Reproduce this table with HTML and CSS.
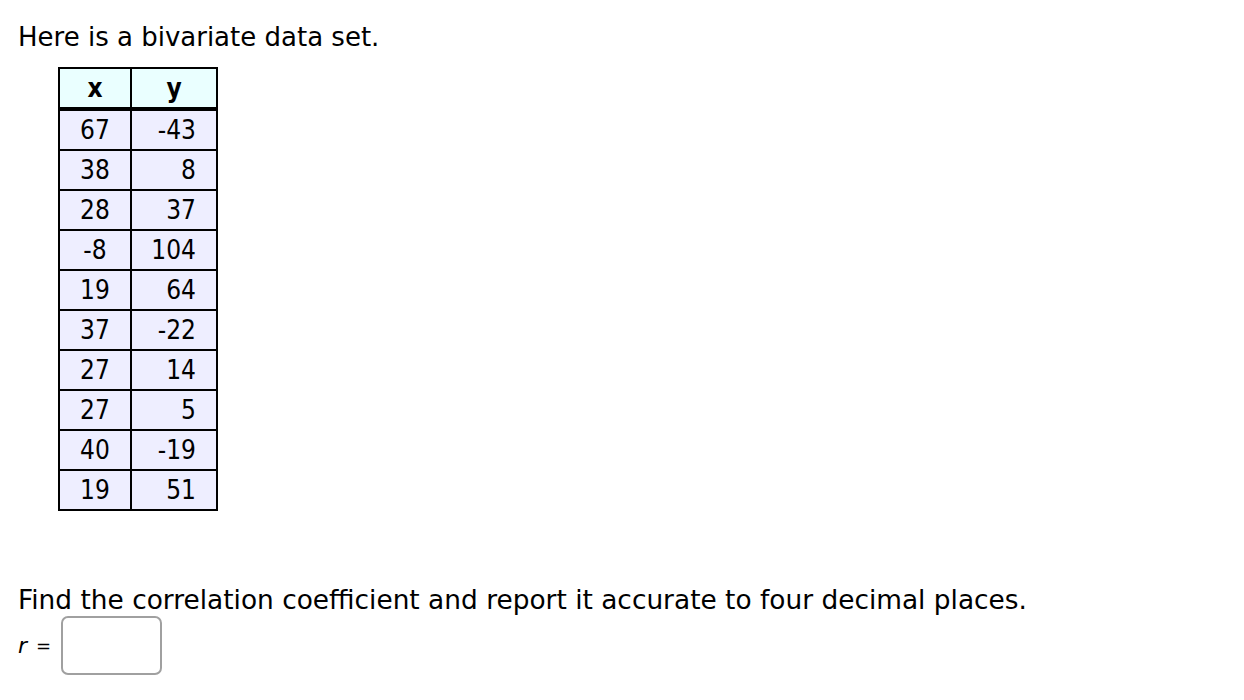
FILE: index.html
```html
<!DOCTYPE html>
<html>
<head>
<meta charset="utf-8">
<link rel="stylesheet" href="styles.css">
</head>
<body>
<div class="page">
  <p class="intro">Here is a bivariate data set.</p>
  <table class="data">
    <thead>
      <tr><th class="cx">x</th><th class="cy">y</th></tr>
    </thead>
    <tbody>
      <tr><td class="cx">67</td><td class="cy">-43</td></tr>
      <tr><td class="cx">38</td><td class="cy">8</td></tr>
      <tr><td class="cx">28</td><td class="cy">37</td></tr>
      <tr><td class="cx">-8</td><td class="cy">104</td></tr>
      <tr><td class="cx">19</td><td class="cy">64</td></tr>
      <tr><td class="cx">37</td><td class="cy">-22</td></tr>
      <tr><td class="cx">27</td><td class="cy">14</td></tr>
      <tr><td class="cx">27</td><td class="cy">5</td></tr>
      <tr><td class="cx">40</td><td class="cy">-19</td></tr>
      <tr><td class="cx">19</td><td class="cy">51</td></tr>
    </tbody>
  </table>
  <p class="question">Find the correlation coefficient and report it accurate to four decimal places.</p>
  <div class="answer">
    <span class="var">r</span><span class="eq">=</span><span class="box"></span>
  </div>
</div>
</body>
</html>
```
FILE: styles.css
```css
html, body {
  margin: 0;
  padding: 0;
  background: #ffffff;
}
body {
  font-family: "DejaVu Sans", sans-serif;
  color: #000;
}
.page {
  padding: 19px 0 0 18px;
}
.intro {
  margin: 0;
  font-size: 26px;
  line-height: 36px;
}
.data {
  margin: 12px 0 0 40px;
  border-collapse: collapse;
  font-family: "DejaVu Sans Condensed", "DejaVu Sans", sans-serif;
  font-size: 26px;
}
.data th, .data td {
  border: 2px solid #000;
  height: 38px;
  padding: 0;
  line-height: 38px;
}
.data th {
  background: #eaffff;
  font-weight: bold;
  text-align: center;
  border-bottom: 4px solid #000;
  height: 38px;
  line-height: 38px;
}
.data td {
  background: #eeeeff;
}
.data .cx {
  width: 70px;
  text-align: center;
}
.data .cy {
  width: 86px;
  text-align: right;
  padding-right: 20px;
  box-sizing: border-box;
}
.data th.cy {
  text-align: center;
  padding-right: 0;
}
.question {
  margin: 71px 0 0 0;
  font-size: 26.4px;
  line-height: 36px;
}
.answer {
  display: flex;
  align-items: center;
  margin-top: -2px;
  font-size: 22px;
}
.var {
  font-style: italic;
}
.eq {
  margin-left: 9px;
  font-size: 18px;
}
.box {
  display: inline-block;
  width: 101px;
  height: 59px;
  border: 2px solid #a0a0a0;
  border-radius: 7px;
  margin-left: 10px;
  box-sizing: border-box;
}
```
